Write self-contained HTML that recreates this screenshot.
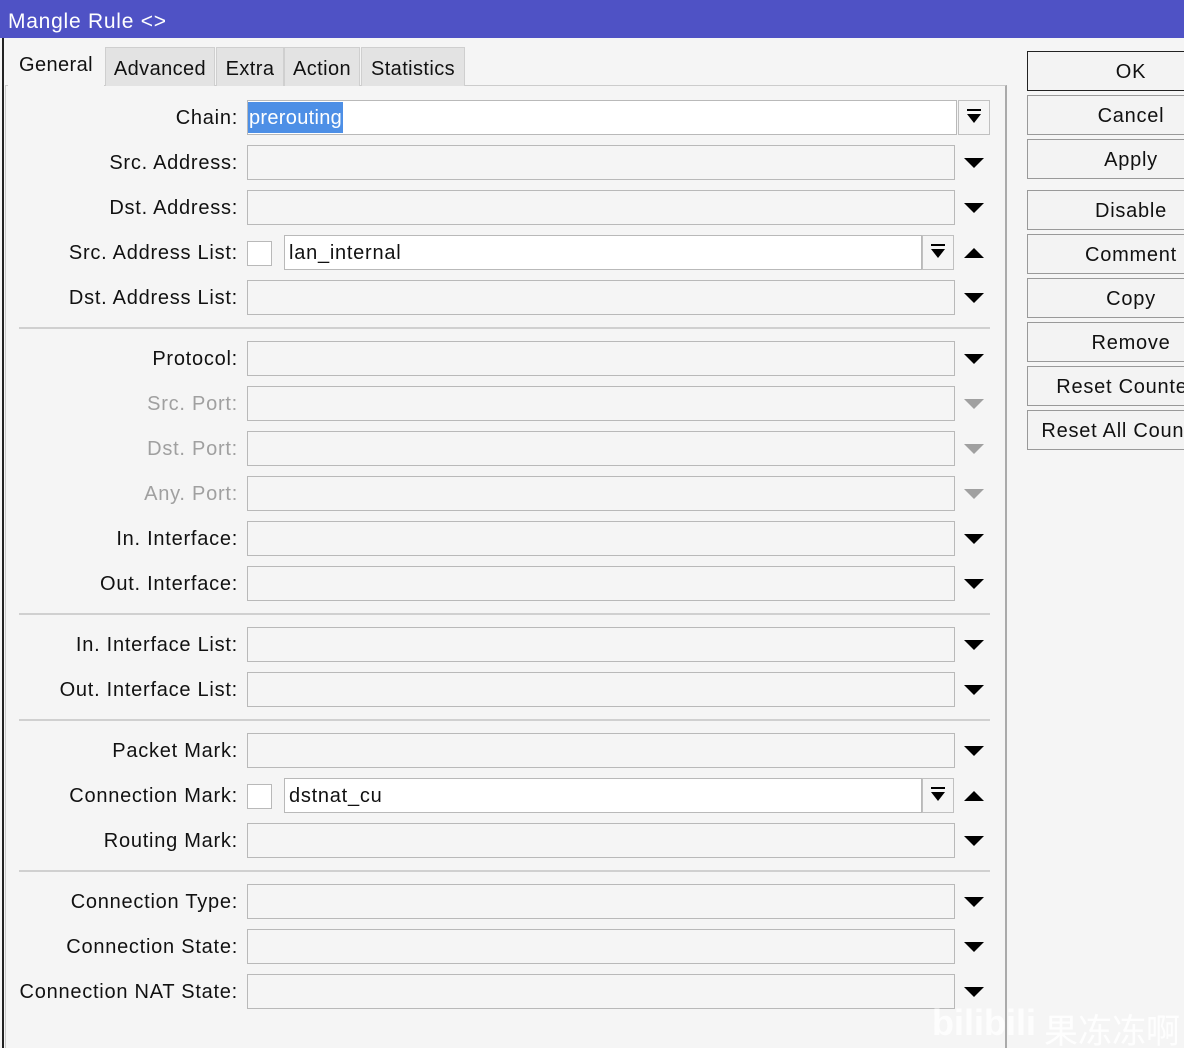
<!DOCTYPE html>
<html style="overflow:hidden"><head><meta charset="utf-8"><style>
html,body{overflow:hidden}
body{margin:0;width:1184px;height:1048px;overflow:hidden;background:#f5f5f5;font-family:"Liberation Sans","Noto Sans CJK SC",sans-serif;font-size:20px;letter-spacing:0.75px;color:#111;position:relative}
.a{position:absolute}
.title{left:0;top:0;width:1184px;height:38px;background:#4f52c5;color:#fff;font-size:21px;line-height:44px;text-indent:8px}
.lbl{right:946px;text-align:right;white-space:nowrap;line-height:36px;height:36px}
.dis{color:#a0a0a0}
.fld{left:247px;width:706px;height:33px;border:1px solid #b9b9b9;background:#f5f5f5}
.arr{left:964px;width:0;height:0;border-left:10px solid transparent;border-right:10px solid transparent;border-top:10px solid #000}
.arr.g{border-top-color:#a0a0a0}
.up{left:964px;width:0;height:0;border-left:10px solid transparent;border-right:10px solid transparent;border-bottom:10px solid #000}
.sep{left:19px;width:971px;height:0;border-top:2px solid #d0d0d0}
.btn{left:1027px;width:206px;height:38px;border:1px solid #999;background:#f3f3f3;line-height:40px;text-align:center;white-space:nowrap;overflow:hidden}
.tab{top:47px;height:38px;background:#e3e3e3;border:1px solid #cfcfcf;border-bottom:none;line-height:42px;text-align:center;letter-spacing:0.4px}
.dd{width:30px;height:33px;border:1px solid #c0c0c0;background:#f5f5f5}
.dd:before{content:"";position:absolute;left:8px;top:8px;width:14px;height:2px;background:#000}
.dd:after{content:"";position:absolute;left:8px;top:13px;border-left:7px solid transparent;border-right:7px solid transparent;border-top:9px solid #000}
.cb{left:247px;width:23px;height:23px;border:1px solid #b9b9b9;background:#fff}
</style></head><body>
<div class="a title">Mangle Rule &lt;&gt;</div>
<div class="a" style="left:2px;top:38px;width:2px;height:1010px;background:#222"></div>
<div class="a" style="left:5px;top:85px;width:999px;height:963px;border-left:1px solid #ccc;border-top:1px solid #ccc;border-right:2px solid #aaa"></div>
<div class="a" style="left:8px;top:42px;width:96px;height:46px;background:#f5f5f5;line-height:46px;text-align:center;letter-spacing:0.4px">General</div>
<div class="a tab" style="left:105px;width:108px">Advanced</div>
<div class="a tab" style="left:216px;width:66px">Extra</div>
<div class="a tab" style="left:284px;width:74px">Action</div>
<div class="a tab" style="left:361px;width:102px">Statistics</div>

<div class="a lbl" style="top:100px">Chain:</div>
<div class="a" style="left:247px;top:100px;width:708px;height:33px;border:1px solid #b9b9b9;background:#fff"><span style="background:#4d8fe6;color:#fff;line-height:33px;padding:0 1px;display:inline-block;height:31px;margin-top:1px;letter-spacing:0.3px">prerouting</span></div>
<div class="a dd" style="left:958px;top:100px"></div>

<div class="a lbl" style="top:145px">Src. Address:</div><div class="a fld" style="top:145px"></div><div class="a arr" style="top:158px"></div>
<div class="a lbl" style="top:190px">Dst. Address:</div><div class="a fld" style="top:190px"></div><div class="a arr" style="top:203px"></div>
<div class="a lbl" style="top:235px">Src. Address List:</div><div class="a cb" style="top:241px"></div>
<div class="a" style="left:284px;top:235px;width:636px;height:33px;border:1px solid #b9b9b9;background:#fff;line-height:35px;text-indent:4px">lan_internal</div>
<div class="a dd" style="left:922px;top:235px"></div><div class="a up" style="top:248px"></div>
<div class="a lbl" style="top:280px">Dst. Address List:</div><div class="a fld" style="top:280px"></div><div class="a arr" style="top:293px"></div>
<div class="a sep" style="top:327px"></div>

<div class="a lbl" style="top:341px">Protocol:</div><div class="a fld" style="top:341px"></div><div class="a arr" style="top:354px"></div>
<div class="a lbl dis" style="top:386px">Src. Port:</div><div class="a fld" style="top:386px"></div><div class="a arr g" style="top:399px"></div>
<div class="a lbl dis" style="top:431px">Dst. Port:</div><div class="a fld" style="top:431px"></div><div class="a arr g" style="top:444px"></div>
<div class="a lbl dis" style="top:476px">Any. Port:</div><div class="a fld" style="top:476px"></div><div class="a arr g" style="top:489px"></div>
<div class="a lbl" style="top:521px">In. Interface:</div><div class="a fld" style="top:521px"></div><div class="a arr" style="top:534px"></div>
<div class="a lbl" style="top:566px">Out. Interface:</div><div class="a fld" style="top:566px"></div><div class="a arr" style="top:579px"></div>
<div class="a sep" style="top:613px"></div>

<div class="a lbl" style="top:627px">In. Interface List:</div><div class="a fld" style="top:627px"></div><div class="a arr" style="top:640px"></div>
<div class="a lbl" style="top:672px">Out. Interface List:</div><div class="a fld" style="top:672px"></div><div class="a arr" style="top:685px"></div>
<div class="a sep" style="top:719px"></div>

<div class="a lbl" style="top:733px">Packet Mark:</div><div class="a fld" style="top:733px"></div><div class="a arr" style="top:746px"></div>
<div class="a lbl" style="top:778px">Connection Mark:</div><div class="a cb" style="top:784px"></div>
<div class="a" style="left:284px;top:778px;width:636px;height:33px;border:1px solid #b9b9b9;background:#fff;line-height:35px;text-indent:4px">dstnat_cu</div>
<div class="a dd" style="left:922px;top:778px"></div><div class="a up" style="top:791px"></div>
<div class="a lbl" style="top:823px">Routing Mark:</div><div class="a fld" style="top:823px"></div><div class="a arr" style="top:836px"></div>
<div class="a sep" style="top:870px"></div>

<div class="a lbl" style="top:884px">Connection Type:</div><div class="a fld" style="top:884px"></div><div class="a arr" style="top:897px"></div>
<div class="a lbl" style="top:929px">Connection State:</div><div class="a fld" style="top:929px"></div><div class="a arr" style="top:942px"></div>
<div class="a lbl" style="top:974px">Connection NAT State:</div><div class="a fld" style="top:974px"></div><div class="a arr" style="top:987px"></div>

<div class="a btn" style="top:51px;border-color:#222">OK</div>
<div class="a btn" style="top:95px">Cancel</div>
<div class="a btn" style="top:139px">Apply</div>
<div class="a btn" style="top:190px">Disable</div>
<div class="a btn" style="top:234px">Comment</div>
<div class="a btn" style="top:278px">Copy</div>
<div class="a btn" style="top:322px">Remove</div>
<div class="a btn" style="top:366px">Reset Counters</div>
<div class="a btn" style="top:410px">Reset All Counters</div>

<div class="a" style="left:932px;top:1002px;color:#fff;font-size:36px;font-weight:bold;opacity:.85;white-space:nowrap;letter-spacing:0">bilibili</div>
<div class="a" style="left:1044px;top:1004px;color:#fff;font-size:34px;opacity:.9;white-space:nowrap;letter-spacing:0">果冻冻啊</div>
</body></html>
